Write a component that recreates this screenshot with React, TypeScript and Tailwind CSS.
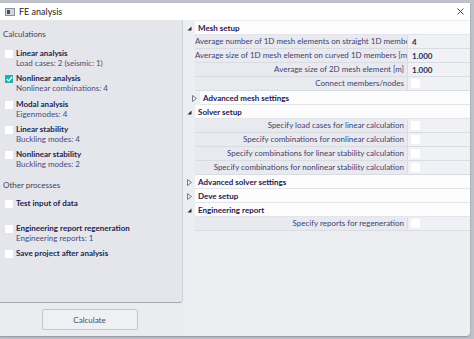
import { Fragment } from 'react';

type CalcItem = { title: string; sub?: string; checked?: boolean };

const calculations: CalcItem[] = [
  { title: 'Linear analysis', sub: 'Load cases: 2 (seismic: 1)' },
  { title: 'Nonlinear analysis', sub: 'Nonlinear combinations: 4', checked: true },
  { title: 'Modal analysis', sub: 'Eigenmodes: 4' },
  { title: 'Linear stability', sub: 'Buckling modes: 4' },
  { title: 'Nonlinear stability', sub: 'Buckling modes: 2' },
];

const otherProcesses: CalcItem[] = [
  { title: 'Test input of data' },
  { title: 'Engineering report regeneration', sub: 'Engineering reports: 1' },
  { title: 'Save project after analysis' },
];

type Row =
  | { kind: 'header'; label: string; open: boolean; level: 0 | 1 }
  | { kind: 'prop'; label: string; value?: string; check?: boolean };

const rows: Row[] = [
  { kind: 'header', label: 'Mesh setup', open: true, level: 0 },
  { kind: 'prop', label: 'Average number of 1D mesh elements on straight 1D members', value: '4' },
  { kind: 'prop', label: 'Average size of 1D mesh element on curved 1D members [m]', value: '1.000' },
  { kind: 'prop', label: 'Average size of 2D mesh element [m]', value: '1.000' },
  { kind: 'prop', label: 'Connect members/nodes', check: true },
  { kind: 'header', label: 'Advanced mesh settings', open: false, level: 1 },
  { kind: 'header', label: 'Solver setup', open: true, level: 0 },
  { kind: 'prop', label: 'Specify load cases for linear calculation', check: true },
  { kind: 'prop', label: 'Specify combinations for nonlinear calculation', check: true },
  { kind: 'prop', label: 'Specify combinations for linear stability calculation', check: true },
  { kind: 'prop', label: 'Specify combinations for nonlinear stability calculation', check: true },
  { kind: 'header', label: 'Advanced solver settings', open: false, level: 0 },
  { kind: 'header', label: 'Deve setup', open: false, level: 0 },
  { kind: 'header', label: 'Engineering report', open: true, level: 0 },
  { kind: 'prop', label: 'Specify reports for regeneration', check: true },
];

function CheckBox({ checked }: { checked?: boolean }) {
  if (checked) {
    return (
      <div className="flex h-[8px] w-[8px] shrink-0 items-center justify-center bg-[#22b3ac]">
        <svg width="7" height="6" viewBox="0 0 7 6">
          <path d="M0.8 3.1 L2.7 4.9 L6.2 1" fill="none" stroke="#ffffff" strokeWidth="1.3" />
        </svg>
      </div>
    );
  }
  return <div className="h-[8px] w-[8px] shrink-0 bg-white" />;
}

function CalcEntry({ item }: { item: CalcItem }) {
  return (
    <div className="flex">
      <div className="ml-[5px] mt-[2px]">
        <CheckBox checked={item.checked} />
      </div>
      <div className="ml-[3px] flex flex-col">
        <span className="h-[10px] text-[8px] font-bold leading-[10px] text-[#23244f]">{item.title}</span>
        <span className="h-[10px] text-[8px] leading-[10px] text-[#4a4b7c]">{item.sub ?? ''}</span>
      </div>
    </div>
  );
}

function Triangle({ open }: { open: boolean }) {
  if (open) {
    return (
      <svg width="5" height="5" viewBox="0 0 5 5">
        <path d="M4.5 0.5 L4.5 4.5 L0.5 4.5 Z" fill="#2a2a2a" />
      </svg>
    );
  }
  return (
    <svg width="5" height="7" viewBox="0 0 5 7">
      <path d="M0.5 0.5 L4.5 3.5 L0.5 6.5 Z" fill="none" stroke="#6b6e80" strokeWidth="0.9" />
    </svg>
  );
}

function PropertyRow({ row }: { row: Row }) {
  if (row.kind === 'header') {
    return (
      <div className="flex h-[14px]">
        <div
          className={
            row.level === 0
              ? 'flex w-[12px] shrink-0 items-center pl-[4px]'
              : 'flex w-[17px] shrink-0 items-center pl-[9px]'
          }
        >
          <Triangle open={row.open} />
        </div>
        <div className="flex min-w-0 flex-1 items-center border-b border-[#e3e5ea] bg-[#fcfcfd] pl-[3px] text-[8px] font-bold text-[#1f2050]">
          {row.label}
        </div>
      </div>
    );
  }
  return (
    <div className="ml-[12px] flex h-[14px] min-w-0 border-b border-[#d9dce3]">
      <div className="min-w-0 flex-1 overflow-hidden whitespace-nowrap bg-[#e8eaef] pr-[3px] text-right text-[8px] leading-[13px] text-[#3f4170]">
        {row.label}
      </div>
      <div className="flex w-[63px] shrink-0 items-center border-l border-[#d9dce3] bg-[#f0f1f4]">
        {row.check ? (
          <div className="ml-[3px] h-[9px] w-[9px] bg-white" />
        ) : (
          <span className="pl-[4px] text-[8px] font-bold text-[#2a2b55]">{row.value}</span>
        )}
      </div>
    </div>
  );
}

export default function App() {
  return (
    <div className="flex h-[339px] w-[474px] flex-col bg-[#bfc2ca] pr-[4px] pt-[3px] font-['Lato',sans-serif]">
      <div className="flex h-[333px] w-[470px] flex-col overflow-hidden rounded-br-[4px] bg-[#eceef2] shadow-[0_1px_2px_rgba(0,0,0,0.25)]">
        {/* title bar */}
        <div className="flex h-[17px] shrink-0 items-center bg-white">
          <svg className="ml-[5px]" width="10" height="8" viewBox="0 0 10 8">
            <rect x="0.5" y="0.5" width="9" height="7" fill="#d4d6dc" stroke="#8b8f99" />
            <rect x="2" y="2" width="3" height="4" fill="#4a4d57" />
          </svg>
          <span className="ml-[4px] text-[9px] text-[#222222]">FE analysis</span>
          <div className="flex-1" />
          <svg className="mr-[6px]" width="7" height="7" viewBox="0 0 7 7">
            <path d="M0.5 0.5 L6.5 6.5 M6.5 0.5 L0.5 6.5" stroke="#3a3a3a" strokeWidth="0.9" />
          </svg>
        </div>

        <div className="flex min-h-0 flex-1">
          {/* left column */}
          <div className="flex w-[183px] shrink-0 flex-col">
            <div className="flex h-[283px] shrink-0 flex-col rounded-br-[4px] border-b border-r border-b-[#a3a7b0] border-r-[#cdd0d7] bg-[#e4e6eb] pt-[8px]">
              <div className="h-[12px] pl-[3px] text-[8px] leading-[12px] text-[#3d3f5c]">Calculations</div>
              <div className="mt-[8px] flex flex-col gap-[5.3px]">
                {calculations.map((item) => (
                  <CalcEntry key={item.title} item={item} />
                ))}
              </div>
              <div className="mt-[10px] h-[12px] pl-[3px] text-[8px] leading-[12px] text-[#3d3f5c]">Other processes</div>
              <div className="mt-[7px] flex flex-col gap-[5px]">
                {otherProcesses.map((item) => (
                  <Fragment key={item.title}>
                    <CalcEntry item={item} />
                  </Fragment>
                ))}
              </div>
            </div>
            <div className="flex flex-1 items-start justify-center bg-[#eaecf0] pt-[6px]">
              <button
                type="button"
                className="ml-[-4px] h-[21px] w-[96px] rounded-[2px] border border-[#c3c6cf] bg-[#eef0f3] text-[8px] text-[#4a4b6e]"
              >
                Calculate
              </button>
            </div>
          </div>

          {/* right column */}
          <div className="flex min-w-0 flex-1 flex-col overflow-hidden pt-[1px]">
            {rows.map((row, i) => (
              <PropertyRow key={i} row={row} />
            ))}
          </div>
        </div>
      </div>
    </div>
  );
}
